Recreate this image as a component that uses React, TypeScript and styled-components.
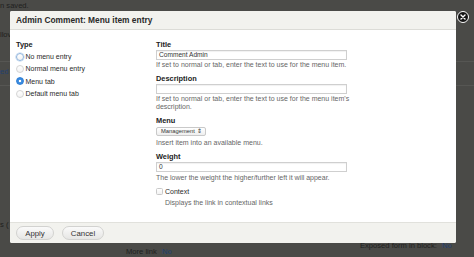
import React from "react";
import styled, { createGlobalStyle } from "styled-components";

const Global = createGlobalStyle`
  html, body { margin: 0; padding: 0; }
  body {
    width: 474px;
    height: 257px;
    overflow: hidden;
    background: #4a4a47;
    font-family: "Liberation Sans", Arial, sans-serif;
  }
`;

const Page = styled.div`
  position: relative;
  width: 474px;
  height: 257px;
  overflow: hidden;
  background: #4a4a47;
`;

const Backdrop = styled.div`
  display: flex;
  flex-direction: column;
  color: #1f1f1e;
  font-size: 7.6px;
  line-height: 8px;
`;

const BackLine = styled.div<{ $top: number; $left?: number; $rule?: boolean }>`
  margin-top: ${(p) => p.$top}px;
  padding-left: ${(p) => p.$left ?? 0}px;
  height: 8px;
  white-space: nowrap;
  ${(p) => (p.$rule ? "border-bottom: 1px solid #565653;" : "")}
`;

const BackLink = styled.span<{ $gap?: number }>`
  color: #23406e;
  margin-left: ${(p) => p.$gap ?? 3}px;
`;

const Dialog = styled.div`
  position: absolute;
  left: 10px;
  top: 11px;
  width: 446px;
  height: 232px;
  display: flex;
  flex-direction: column;
  background: #fff;
  border-radius: 2px;
`;

const TitleBar = styled.div`
  height: 18px;
  display: flex;
  align-items: center;
  padding: 0 6px;
  background: #f2f2ee;
  border-bottom: 1px solid #dcdcd7;
  border-radius: 2px 2px 0 0;
`;

const Title = styled.h1`
  margin: 0;
  font-size: 8.4px;
  font-weight: bold;
  color: #2a2a2a;
`;

const CloseButton = styled.button`
  position: absolute;
  left: 447px;
  top: 0px;
  width: 12px;
  height: 12px;
  padding: 0;
  border: 1.5px solid #fff;
  border-radius: 50%;
  background: #151515;
  display: flex;
  align-items: center;
  justify-content: center;
  svg { display: block; }
`;

const Body = styled.div`
  flex: 1;
  display: grid;
  grid-template-columns: 140px 200px;
  padding: 10px 6px 0;
  color: #222;
`;

const Column = styled.div`
  display: flex;
  flex-direction: column;
`;

const Label = styled.div`
  font-size: 7.4px;
  font-weight: bold;
  line-height: 9px;
  height: 9px;
`;

const RadioList = styled.div`
  display: flex;
  flex-direction: column;
  margin-top: 1.5px;
`;

const RadioRow = styled.label`
  display: flex;
  align-items: center;
  height: 12.3px;
  font-size: 7px;
  color: #2a2a2a;
`;

const RadioDot = styled.span<{ $checked?: boolean; $focus?: boolean }>`
  box-sizing: border-box;
  width: 8px;
  height: 8px;
  border-radius: 50%;
  margin-right: 1.5px;
  flex: none;
  border: 1px solid ${(p) => (p.$checked ? "#2f7fd6" : p.$focus ? "#8fb4dc" : "#d4d4d4")};
  background: ${(p) =>
    p.$checked
      ? "radial-gradient(circle, #fff 0 1.3px, #3a8be0 1.6px)"
      : "linear-gradient(#fff, #f3f3f3)"};
  ${(p) => (p.$focus ? "box-shadow: 0 0 0 0.6px #b9d2ee;" : "")}
`;

const Item = styled.div<{ $gap?: number }>`
  display: flex;
  flex-direction: column;
  margin-bottom: ${(p) => p.$gap ?? 5}px;
`;

const TextInput = styled.div`
  box-sizing: border-box;
  width: 191px;
  height: 10px;
  margin-top: 1px;
  border: 1px solid #cfcfcf;
  box-shadow: inset 0 1px 1px rgba(0, 0, 0, 0.06);
  font-size: 6.6px;
  line-height: 8px;
  padding-left: 2px;
  color: #333;
`;

const Select = styled.div`
  box-sizing: border-box;
  align-self: flex-start;
  height: 9px;
  margin-top: 1.5px;
  padding: 0 3px 0 4px;
  border: 1px solid #c9c9c9;
  border-radius: 2px;
  background: linear-gradient(#fff, #eee);
  font-size: 5.8px;
  line-height: 7px;
  color: #333;
  display: flex;
  align-items: center;
  gap: 2px;
`;

const Description = styled.div<{ $top?: number }>`
  font-size: 7px;
  line-height: 8px;
  color: #666;
  margin-top: ${(p) => p.$top ?? 1}px;
`;

const CheckRow = styled.label`
  display: flex;
  align-items: center;
  height: 9px;
  font-size: 7px;
  color: #2a2a2a;
`;

const CheckBox = styled.span`
  box-sizing: border-box;
  width: 7px;
  height: 7px;
  border: 1px solid #c9c9c9;
  border-radius: 1.5px;
  background: linear-gradient(#fff, #f2f2f2);
  margin-right: 2px;
`;

const Indented = styled(Description)`
  padding-left: 9px;
`;

const Footer = styled.div`
  height: 20px;
  display: flex;
  align-items: center;
  gap: 8px;
  padding: 0 6px;
  background: #f2f2ee;
  border-top: 1px solid #e1e1dc;
  border-radius: 0 0 2px 2px;
`;

const Button = styled.button<{ $w: number }>`
  box-sizing: border-box;
  width: ${(p) => p.$w}px;
  height: 14px;
  padding: 0;
  border: 1px solid #d2d2d0;
  border-radius: 7px;
  background: linear-gradient(#fafafa, #e6e6e4);
  font-family: inherit;
  font-size: 7.8px;
  color: #333;
`;

export default function App() {
  return (
    <>
      <Global />
      <Page>
        <Backdrop>
          <BackLine $top={2}>n saved.</BackLine>
          <BackLine $top={21}>llov</BackLine>
          <BackLine $top={14} $rule />
          <BackLine $top={6}>
            <BackLink $gap={0}>ed</BackLink>
          </BackLine>
          <BackLine $top={1} $rule />
          <BackLine $top={135}>s (</BackLine>
          <BackLine $top={13} $left={360}>
            Exposed form in block: <BackLink>No</BackLink>
          </BackLine>
          <BackLine $top={-2} $left={126}>
            More link <BackLink>No</BackLink>
          </BackLine>
        </Backdrop>
        <Dialog>
          <TitleBar>
            <Title>Admin Comment: Menu item entry</Title>
          </TitleBar>
          <CloseButton aria-label="Close">
            <svg width="6" height="6" viewBox="0 0 6 6">
              <path d="M1 1 L5 5 M5 1 L1 5" stroke="#fff" strokeWidth="1.4" strokeLinecap="round" />
            </svg>
          </CloseButton>
          <Body>
            <Column>
              <Label>Type</Label>
              <RadioList>
                <RadioRow>
                  <RadioDot $focus />
                  No menu entry
                </RadioRow>
                <RadioRow>
                  <RadioDot />
                  Normal menu entry
                </RadioRow>
                <RadioRow>
                  <RadioDot $checked />
                  Menu tab
                </RadioRow>
                <RadioRow>
                  <RadioDot />
                  Default menu tab
                </RadioRow>
              </RadioList>
            </Column>
            <Column>
              <Item>
                <Label>Title</Label>
                <TextInput>Comment Admin</TextInput>
                <Description>If set to normal or tab, enter the text to use for the menu item.</Description>
              </Item>
              <Item>
                <Label>Description</Label>
                <TextInput />
                <Description>
                  If set to normal or tab, enter the text to use for the menu item's description.
                </Description>
              </Item>
              <Item $gap={5}>
                <Label>Menu</Label>
                <Select>
                  Management <span>⇕</span>
                </Select>
                <Description $top={3}>Insert item into an available menu.</Description>
              </Item>
              <Item>
                <Label>Weight</Label>
                <TextInput>0</TextInput>
                <Description $top={2}>The lower the weight the higher/further left it will appear.</Description>
              </Item>
              <Item>
                <CheckRow>
                  <CheckBox />
                  Context
                </CheckRow>
                <Indented $top={3}>Displays the link in contextual links</Indented>
              </Item>
            </Column>
          </Body>
          <Footer>
            <Button $w={38}>Apply</Button>
            <Button $w={42}>Cancel</Button>
          </Footer>
        </Dialog>
      </Page>
    </>
  );
}
